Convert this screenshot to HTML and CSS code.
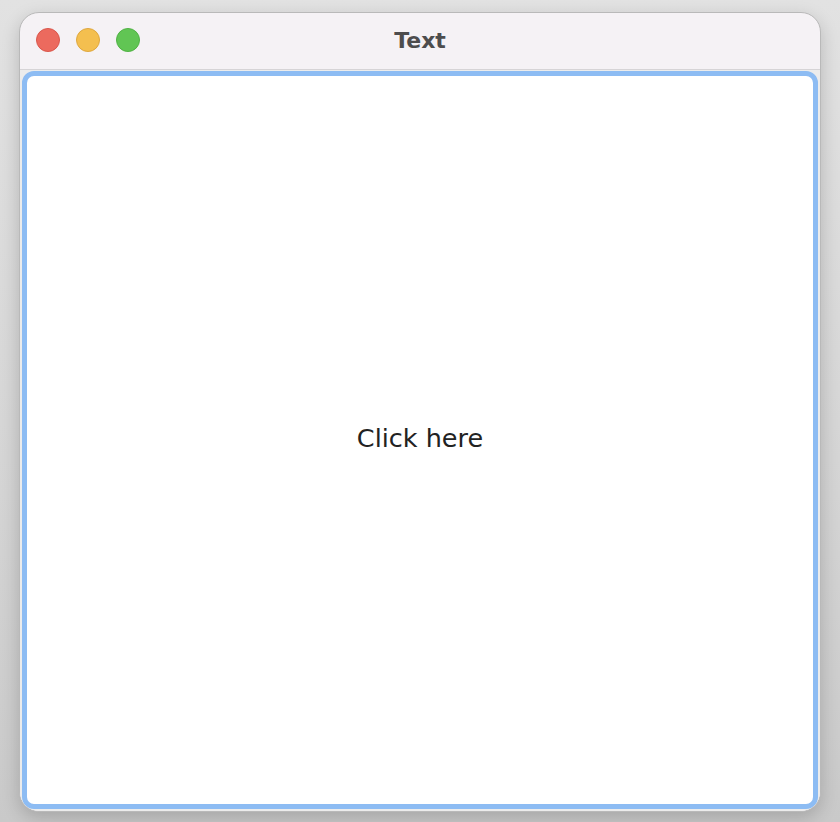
FILE: index.html
```html
<!DOCTYPE html>
<html>
<head>
<meta charset="utf-8">
<link rel="stylesheet" href="styles.css">
</head>
<body>
<div class="window">
  <div class="titlebar">
    <div class="lights">
      <span class="light red"></span>
      <span class="light yellow"></span>
      <span class="light green"></span>
    </div>
    <div class="title">Text</div>
  </div>
  <div class="content">
    <div class="field">
      <span class="label">Click here</span>
    </div>
  </div>
</div>
</body>
</html>
```
FILE: styles.css
```css
html, body {
  margin: 0;
  padding: 0;
}
body {
  width: 840px;
  height: 822px;
  background: linear-gradient(180deg, #e2e2e2 0%, #d4d4d4 60%, #c9c9c9 100%);
  overflow: hidden;
  padding-top: 12px;
  padding-left: 19px;
  box-sizing: border-box;
}
.window {
  width: 802px;
  height: 800px;
  border: 1px solid #b9b9b9;
  border-radius: 20px;
  background: #f5f2f5;
  box-shadow: 0 6px 18px rgba(0,0,0,0.18);
  box-sizing: border-box;
  display: flex;
  flex-direction: column;
  overflow: hidden;
}
.titlebar {
  position: relative;
  height: 56px;
  flex: none;
  display: flex;
  align-items: center;
  justify-content: center;
  border-bottom: 1px solid #d6d4d6;
}
.lights {
  position: absolute;
  left: 16px;
  top: 15px;
  display: flex;
  gap: 16px;
}
.light {
  width: 24px;
  height: 24px;
  border-radius: 50%;
  box-sizing: border-box;
}
.red { background: #ec6a5e; border: 1px solid #d9574c; }
.yellow { background: #f4bf4f; border: 1px solid #dea73f; }
.green { background: #61c554; border: 1px solid #50b244; }
.title {
  font-family: "DejaVu Sans", sans-serif;
  font-weight: 700;
  font-size: 22px;
  color: #4d4d4d;
  margin-top: -2px;
}
.content {
  flex: 1;
  background: #ececec;
  padding: 1px 2px 2px 2px;
  display: flex;
}
.field {
  flex: 1;
  background: #fff;
  border: 5px solid #8dbcf3;
  border-radius: 12px;
  display: flex;
  align-items: center;
  justify-content: center;
}
.label {
  font-family: "DejaVu Sans", sans-serif;
  font-size: 25.5px;
  color: #222;
  margin-top: -4px;
}
```
